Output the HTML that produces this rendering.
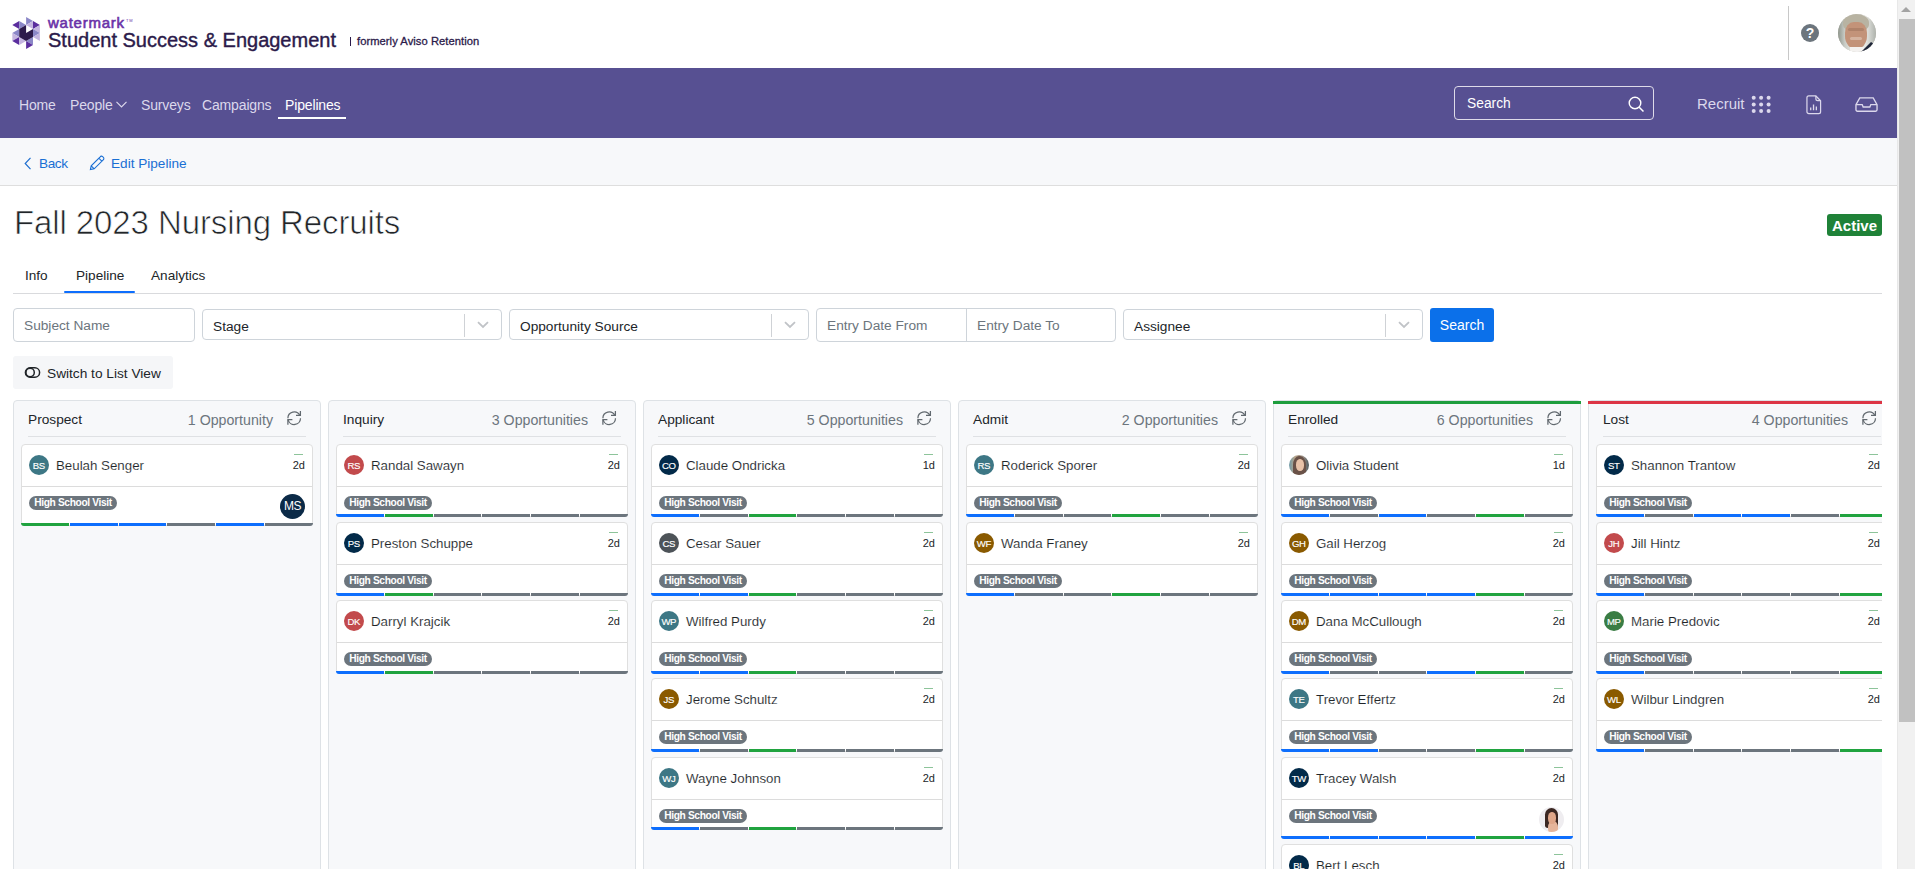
<!DOCTYPE html>
<html><head><meta charset="utf-8">
<style>
*{box-sizing:border-box}
html,body{margin:0;padding:0}
body{width:1915px;height:869px;overflow:hidden;position:relative;background:#fff;font-family:"Liberation Sans",sans-serif;color:#212529}
.abs{position:absolute;white-space:nowrap}
/* header */
#hdr{position:absolute;left:0;top:0;width:1897px;height:68px;background:#fff}
#logo{position:absolute;left:12px;top:12px;width:30px;height:40px}
#wm{position:absolute;left:48px;top:13.5px;letter-spacing:0.75px;font-size:15px;font-weight:400;color:#6a32a8;-webkit-text-stroke:0.6px #6a32a8}
#sse{position:absolute;left:48px;top:29px;font-size:20px;font-weight:400;color:#2b1a4a;-webkit-text-stroke:0.4px #2b1a4a}
#fa{position:absolute;left:357px;top:35px;font-size:11.2px;letter-spacing:0.05px;font-weight:400;color:#2b1a4a;-webkit-text-stroke:0.3px #2b1a4a}
#pipe{position:absolute;left:350px;top:37px;width:1px;height:9px;background:#2b1a4a}
#vdiv{position:absolute;left:1788px;top:6px;width:1px;height:54px;background:#c8c8c8}
#help{position:absolute;left:1801px;top:24px;width:18px;height:18px;border-radius:50%;background:#6c757d;color:#fff;font-size:14px;font-weight:700;text-align:center;line-height:18px}
#me{position:absolute;left:1838px;top:14px;width:38px;height:38px;border-radius:50%;overflow:hidden;background:#c9c3b8;filter:blur(0.4px)}
/* nav */
#nav{position:absolute;left:0;top:68px;width:1897px;height:70px;background:#575092}
.ni{position:absolute;top:29px;font-size:14px;letter-spacing:-0.15px;color:#dcd8ec}
#nsearch{position:absolute;left:1454px;top:18px;width:200px;height:34px;border:1px solid #dedbe9;border-radius:4px}
#nsearch span{position:absolute;left:12px;top:9px;font-size:13.8px;color:#fff}
/* subheader */
#sub{position:absolute;left:0;top:138px;width:1897px;height:48px;background:#f7f8fa;border-bottom:1px solid #dedede}
.lnk{position:absolute;top:18px;font-size:13.6px;color:#1a6fd4}
#title{position:absolute;left:14px;top:204px;font-size:33px;color:#212529;letter-spacing:-0.1px;-webkit-text-stroke:0.7px #fff}
#active{position:absolute;left:1827px;top:214px;width:55px;height:22px;background:#1f8238;border-radius:3px;color:#fff;font-weight:700;font-size:15px;text-align:center;line-height:23px}
.tab{position:absolute;top:268px;font-size:13.6px;color:#212529}
#tabul{position:absolute;left:64px;top:291px;width:71px;height:2px;background:#0d6efd;border-radius:1px}
#tabline{position:absolute;left:13px;top:293px;width:1869px;height:1px;background:#d9dadd}
.inp{position:absolute;top:309px;height:31px;border:1px solid #ced4da;border-radius:4px;background:#fff}
.inp span{position:absolute;left:10px;top:8px;font-size:13.7px;color:#6c757d}
.sel span{color:#212529}
.sel .vd{position:absolute;top:4px;width:1px;height:23px;background:#cfd2d6}
.sel svg{position:absolute;top:11px}
#sbtn{position:absolute;left:1430px;top:308px;width:64px;height:34px;background:#0b70ea;border-radius:3px;color:#fff;font-size:14px;text-align:center;line-height:34px}
#switch{position:absolute;left:13px;top:356px;width:160px;height:33px;background:#f5f6f8;border-radius:3px}
#switch span{position:absolute;left:34px;top:10px;font-size:13.7px;color:#212529}
/* kanban */
#kb{position:absolute;left:0;top:0;width:1882px;height:869px;overflow:hidden}
.col{position:absolute;top:400px;width:308px;height:600px;background:#f7f8fa;border:1px solid #dee2e6;border-radius:4px}
.tb{position:absolute;left:-1px;top:0px;width:308px;height:3px}
.ct{position:absolute;left:14px;top:10.5px;font-size:13.7px;color:#212529;white-space:nowrap}
.cc{position:absolute;right:47px;top:11px;font-size:14.2px;color:#6c757d;white-space:nowrap}
.rf{position:absolute;left:273px;top:10px}
.sep{position:absolute;left:14px;top:35px;width:278px;height:1px;background:#dfe1e4}
.card{position:absolute;left:7px;width:292px;background:#fff;border:1px solid #dfdfdf;border-radius:4px}
.ch{position:absolute;left:0;top:0;width:290px;height:42px;border-bottom:1px solid #dcdcdc}
.av{position:absolute;left:7px;top:10px;width:20px;height:20px;border-radius:50%;color:#fff;font-size:9.6px;font-weight:400;text-align:center;line-height:22.4px;letter-spacing:-0.4px;text-indent:-0.4px;overflow:hidden;-webkit-text-stroke:0.15px #fff}
.nm{position:absolute;left:34px;top:13px;font-size:13.3px;color:#212529;white-space:nowrap;-webkit-text-stroke:0.12px #fff}
.dash{position:absolute;left:272px;top:9px;width:9px;height:1px;background:#8dc49a}
.dd{position:absolute;right:7px;top:14px;font-size:11px;color:#212529}
.badge{position:absolute;left:7px;top:51px;width:88px;height:14px;border-radius:7px;background:#6c757d;color:#fff;font-size:10.2px;font-weight:700;line-height:14px;text-align:center;letter-spacing:-0.35px;white-space:nowrap}
.pb{position:absolute;left:-1px;width:292px;height:3px;display:flex;gap:1px;border-radius:0 0 4px 4px;overflow:hidden}
.pb i{flex:1;height:3px;display:block}
.ms{position:absolute;left:258px;top:49px;width:25px;height:25px;border-radius:50%;background:#0b2a47;color:#fff;font-size:12px;text-align:center;line-height:25px;letter-spacing:-0.5px}
.ph2{position:absolute;left:257px;top:49px;width:25px;height:25px;border-radius:50%;background:#efedf0;overflow:hidden}
.hair2{position:absolute;left:6px;top:1px;width:13px;height:20px;border-radius:7px 7px 3px 3px;background:#3b2722}
.face2{position:absolute;left:9px;top:5px;width:8px;height:12px;border-radius:45%;background:#dfa689;box-shadow:1px 10px 0 1px #e6b59b}
.ph1{background:linear-gradient(90deg,#6f9aa8 0%,#b8a58a 30%,#9a8f86 70%,#4d5a60 100%)}
.ph1 .hair{position:absolute;left:4px;top:1px;width:13px;height:20px;border-radius:45% 45% 20% 20%;background:#6a5248}
.ph1 .face{position:absolute;left:6.5px;top:4px;width:8.5px;height:12px;border-radius:45%;background:#e8c2a8}
/* scrollbar */
#sb{position:absolute;left:1897px;top:0;width:18px;height:869px;background:#f1f1f1;border-left:1px solid #e8e8e8}
#sbt{position:absolute;left:1899px;top:19px;width:16px;height:703px;background:#c1c1c1}
#sbu{position:absolute;left:1901px;top:7px;width:0;height:0;border-left:5px solid transparent;border-right:5px solid transparent;border-bottom:5px solid #a3a3a3}
</style></head>
<body>
<div id="hdr">
  <svg id="logo" width="30" height="40" viewBox="0 0 30 40"><polygon points="7.20,9.00 7.20,17.00 0.30,13.00" fill="#5b2e9e"/><polygon points="7.20,17.00 7.20,25.00 0.30,21.00" fill="#8b87c7"/><polygon points="0.30,21.00 0.30,29.00 7.20,25.00" fill="#c4b5e0"/><polygon points="7.20,25.00 7.20,33.00 0.30,29.00" fill="#5b2e9e"/><polygon points="7.20,9.00 7.20,17.00 14.10,13.00" fill="#8b87c7"/><polygon points="7.20,25.00 7.20,33.00 14.10,29.00" fill="#c4b5e0"/><polygon points="14.10,5.00 14.10,13.00 21.00,9.00" fill="#8b87c7"/><polygon points="21.00,9.00 21.00,17.00 14.10,13.00" fill="#c4b5e0"/><polygon points="21.00,25.00 21.00,33.00 14.10,29.00" fill="#8b87c7"/><polygon points="14.10,29.00 14.10,37.00 21.00,33.00" fill="#5b2e9e"/><polygon points="21.00,9.00 21.00,17.00 27.90,13.00" fill="#5b2e9e"/><polygon points="27.90,13.00 27.90,21.00 21.00,17.00" fill="#c4b5e0"/><polygon points="21.00,17.00 21.00,25.00 27.90,21.00" fill="#8b87c7"/><polygon points="27.90,21.00 27.90,29.00 21.00,25.00" fill="#c4b5e0"/><polygon points="7.20,17.00 14.10,13.00 14.10,21.00 21.00,17.00 21.00,25.00 14.10,29.00 7.20,25.00" fill="#2d1b4b"/></svg>
  <span id="wm">watermark<span style="position:absolute;left:78px;top:4px;font-size:4px;-webkit-text-stroke:0">TM</span></span>
  <span id="sse">Student Success &amp; Engagement</span>
  <div id="pipe"></div><span id="fa">formerly Aviso Retention</span>
  <div id="vdiv"></div>
  <div id="help">?</div>
  <div id="me">
    <div style="position:absolute;left:0;top:0;width:38px;height:38px;background:linear-gradient(90deg,#8f968d 0%,#c9ccc6 18%,#e4e5e1 35%,#d5d7d2 60%,#e8e9e5 72%,#aeb2ac 100%)"></div>
    <div style="position:absolute;left:5px;top:0px;width:26px;height:17px;border-radius:50% 50% 35% 35%;background:#b8b3a2"></div>
    <div style="position:absolute;left:7px;top:8px;width:22px;height:27px;border-radius:40% 40% 48% 48%;background:#c39379"></div>
    <div style="position:absolute;left:10px;top:14px;width:16px;height:3px;border-radius:2px;background:#8a6550;opacity:.35"></div>
    <div style="position:absolute;left:12px;top:23px;width:12px;height:3px;border-radius:2px;background:#f0e4da;opacity:.4"></div>
    <div style="position:absolute;left:12px;top:33px;width:14px;height:6px;background:#f4f2f0"></div>
    <div style="position:absolute;left:0;top:0;width:38px;height:38px;background:#1f2638;clip-path:polygon(23px 38px,33px 28px,36px 30px,38px 38px)"></div>
  </div>
</div>
<div id="nav">
  <span class="ni" style="left:19px">Home</span>
  <span class="ni" style="left:70px">People</span>
  <svg class="abs" style="left:116px;top:33px" width="11" height="7" viewBox="0 0 11 7"><path d="M0.5 0.8 L5.5 5.8 L10.5 0.8" fill="none" stroke="#dcd8ec" stroke-width="1.2"/></svg>
  <span class="ni" style="left:141px">Surveys</span>
  <span class="ni" style="left:202px">Campaigns</span>
  <span class="ni" style="left:285px;color:#fff">Pipelines</span>
  <div class="abs" style="left:278px;top:49px;width:68px;height:2px;background:#fff"></div>
  <div id="nsearch"><span>Search</span>
    <svg class="abs" style="left:173px;top:9px" width="17" height="17" viewBox="0 0 17 17"><circle cx="7" cy="7" r="5.8" fill="none" stroke="#fff" stroke-width="1.4"/><path d="M11.2 11.2 L15.5 15.5" stroke="#fff" stroke-width="1.5"/></svg>
  </div>
  <span class="abs" style="left:1697px;top:27px;font-size:15px;color:#dcd8ec">Recruit</span>
  <svg class="abs" style="left:1751px;top:27px" width="20" height="20" viewBox="0 0 20 20" fill="#dcd8ec">
    <circle cx="2.7" cy="2.8" r="2"/><circle cx="10.1" cy="2.8" r="2"/><circle cx="17.6" cy="2.8" r="2"/>
    <circle cx="2.7" cy="9.5" r="2"/><circle cx="10.1" cy="9.5" r="2"/><circle cx="17.6" cy="9.5" r="2"/>
    <circle cx="2.7" cy="16" r="2"/><circle cx="10.1" cy="16" r="2"/><circle cx="17.6" cy="16" r="2"/>
  </svg>
  <svg class="abs" style="left:1805.5px;top:27px" width="16" height="20" viewBox="0 0 17 21" preserveAspectRatio="none" fill="none" stroke="#dcd8ec" stroke-width="1.3">
    <path d="M3 1 H10.5 L15.5 6 V17.5 A2 2 0 0 1 13.5 19.5 H3 A2 2 0 0 1 1 17.5 V3 A2 2 0 0 1 3 1 Z"/>
    <path d="M10.5 1 V4 A2 2 0 0 0 12.5 6 H15.5"/>
    <path d="M5 16 V13 M8 16 V10 M11 16 V12" stroke-width="1.4"/>
  </svg>
  <svg class="abs" style="left:1854.5px;top:29.2px" width="23" height="15.2" viewBox="0 0 24 16" preserveAspectRatio="none" fill="none" stroke="#dcd8ec" stroke-width="1.4">
    <path d="M5 1 H19 L23 8 V13.5 A1.5 1.5 0 0 1 21.5 15 H2.5 A1.5 1.5 0 0 1 1 13.5 V8 Z"/>
    <path d="M1 8 H7.5 L8.5 10.5 H15.5 L16.5 8 H23"/>
  </svg>
</div>
<div id="sub">
  <svg class="abs" style="left:24px;top:19px" width="8" height="13" viewBox="0 0 8 13"><path d="M6.5 0.8 L1.2 6.5 L6.5 12.2" fill="none" stroke="#1f6fd0" stroke-width="1.2"/></svg>
  <span class="lnk" style="left:39px;letter-spacing:-0.4px">Back</span>
  <svg class="abs" style="left:89px;top:17px" width="16" height="16" viewBox="0 0 16 16" fill="none" stroke="#1a6fd4" stroke-width="1.1"><path d="M11.2 1.8 A1.6 1.6 0 0 1 13.6 1.6 L14.4 2.4 A1.6 1.6 0 0 1 14.2 4.8 L5.2 13.8 L1.4 14.6 L2.2 10.8 Z M9.8 3.2 L12.8 6.2 M2.2 10.8 L5.2 13.8"/></svg>
  <span class="lnk" style="left:111px">Edit Pipeline</span>
</div>
<span id="title">Fall 2023 Nursing Recruits</span>
<div id="active">Active</div>
<span class="tab" style="left:25px">Info</span>
<span class="tab" style="left:76px">Pipeline</span>
<span class="tab" style="left:151px">Analytics</span>
<div id="tabul"></div>
<div id="tabline"></div>

<div class="inp" style="left:13px;width:182px;height:34px;top:308px"><span style="top:9px">Subject Name</span></div>
<div class="inp sel" style="left:202px;width:300px"><span style="top:9px">Stage</span><div class="vd" style="left:261px"></div>
  <svg style="left:274px" width="12" height="8" viewBox="0 0 12 8"><path d="M1 1.2 L6 6 L11 1.2" fill="none" stroke="#c0c3c7" stroke-width="1.8"/></svg></div>
<div class="inp sel" style="left:509px;width:300px"><span style="top:9px">Opportunity Source</span><div class="vd" style="left:261px"></div>
  <svg style="left:274px" width="12" height="8" viewBox="0 0 12 8"><path d="M1 1.2 L6 6 L11 1.2" fill="none" stroke="#c0c3c7" stroke-width="1.8"/></svg></div>
<div class="inp" style="left:816px;width:300px;height:34px;top:308px"><span style="top:9px">Entry Date From</span>
  <div class="abs" style="left:149px;top:0;width:1px;height:32px;background:#ced4da"></div><span style="left:160px;top:9px">Entry Date To</span></div>
<div class="inp sel" style="left:1123px;width:300px"><span style="top:9px">Assignee</span><div class="vd" style="left:261px"></div>
  <svg style="left:274px" width="12" height="8" viewBox="0 0 12 8"><path d="M1 1.2 L6 6 L11 1.2" fill="none" stroke="#c0c3c7" stroke-width="1.8"/></svg></div>
<div id="sbtn">Search</div>
<div id="switch">
  <svg class="abs" style="left:11px;top:10px" width="17" height="13" viewBox="0 0 17 13" fill="none" stroke="#212529" stroke-width="1.5"><rect x="1.4" y="1.8" width="14.2" height="9.4" rx="4.7"/><circle cx="6.1" cy="6.5" r="4.2"/></svg>
  <span>Switch to List View</span>
</div>

<div id="kb"><div class="col" style="left:13px"><span class="ct">Prospect</span><span class="cc">1 Opportunity</span><svg class="rf" width="16" height="16" viewBox="0 0 16 16" style="overflow:visible"><path d="M0.90 7.20 A6.3 6.3 0 0 1 12.76 4.24" fill="none" stroke="#62696f" stroke-width="1.25"/><path d="M9 4.4 H13.4 V0" fill="none" stroke="#62696f" stroke-width="1.25"/><path d="M13.50 7.20 A6.3 6.3 0 0 1 1.11 8.83" fill="none" stroke="#62696f" stroke-width="1.25"/><path d="M5.4 8.7 H0.9 V13.8" fill="none" stroke="#62696f" stroke-width="1.25"/></svg><div class="sep"></div><div class="card" style="top:43.00px;height:82.2px"><div class="ch"><span class="av" style="background:#3d7785">BS</span><span class="nm">Beulah Senger</span><span class="dash"></span><span class="dd">2d</span></div><span class="badge">High School Visit</span><span class="ms">MS</span><div class="pb" style="top:78.20px"><i style="background:#20a33f"></i><i style="background:#0d6efd"></i><i style="background:#0d6efd"></i><i style="background:#6c757d"></i><i style="background:#0d6efd"></i><i style="background:#6c757d"></i></div></div></div><div class="col" style="left:328px"><span class="ct">Inquiry</span><span class="cc">3 Opportunities</span><svg class="rf" width="16" height="16" viewBox="0 0 16 16" style="overflow:visible"><path d="M0.90 7.20 A6.3 6.3 0 0 1 12.76 4.24" fill="none" stroke="#62696f" stroke-width="1.25"/><path d="M9 4.4 H13.4 V0" fill="none" stroke="#62696f" stroke-width="1.25"/><path d="M13.50 7.20 A6.3 6.3 0 0 1 1.11 8.83" fill="none" stroke="#62696f" stroke-width="1.25"/><path d="M5.4 8.7 H0.9 V13.8" fill="none" stroke="#62696f" stroke-width="1.25"/></svg><div class="sep"></div><div class="card" style="top:43.00px;height:73.4px"><div class="ch"><span class="av" style="background:#c24a4c">RS</span><span class="nm">Randal Sawayn</span><span class="dash"></span><span class="dd">2d</span></div><span class="badge">High School Visit</span><div class="pb" style="top:69.40px"><i style="background:#0d6efd"></i><i style="background:#20a33f"></i><i style="background:#6c757d"></i><i style="background:#6c757d"></i><i style="background:#6c757d"></i><i style="background:#6c757d"></i></div></div><div class="card" style="top:121.15px;height:73.4px"><div class="ch"><span class="av" style="background:#022a49">PS</span><span class="nm">Preston Schuppe</span><span class="dash"></span><span class="dd">2d</span></div><span class="badge">High School Visit</span><div class="pb" style="top:69.40px"><i style="background:#0d6efd"></i><i style="background:#20a33f"></i><i style="background:#6c757d"></i><i style="background:#6c757d"></i><i style="background:#6c757d"></i><i style="background:#6c757d"></i></div></div><div class="card" style="top:199.30px;height:73.4px"><div class="ch"><span class="av" style="background:#c24a4c">DK</span><span class="nm">Darryl Krajcik</span><span class="dash"></span><span class="dd">2d</span></div><span class="badge">High School Visit</span><div class="pb" style="top:69.40px"><i style="background:#0d6efd"></i><i style="background:#20a33f"></i><i style="background:#6c757d"></i><i style="background:#6c757d"></i><i style="background:#6c757d"></i><i style="background:#6c757d"></i></div></div></div><div class="col" style="left:643px"><span class="ct">Applicant</span><span class="cc">5 Opportunities</span><svg class="rf" width="16" height="16" viewBox="0 0 16 16" style="overflow:visible"><path d="M0.90 7.20 A6.3 6.3 0 0 1 12.76 4.24" fill="none" stroke="#62696f" stroke-width="1.25"/><path d="M9 4.4 H13.4 V0" fill="none" stroke="#62696f" stroke-width="1.25"/><path d="M13.50 7.20 A6.3 6.3 0 0 1 1.11 8.83" fill="none" stroke="#62696f" stroke-width="1.25"/><path d="M5.4 8.7 H0.9 V13.8" fill="none" stroke="#62696f" stroke-width="1.25"/></svg><div class="sep"></div><div class="card" style="top:43.00px;height:73.4px"><div class="ch"><span class="av" style="background:#022a49">CO</span><span class="nm">Claude Ondricka</span><span class="dash"></span><span class="dd">1d</span></div><span class="badge">High School Visit</span><div class="pb" style="top:69.40px"><i style="background:#0d6efd"></i><i style="background:#6c757d"></i><i style="background:#20a33f"></i><i style="background:#6c757d"></i><i style="background:#6c757d"></i><i style="background:#6c757d"></i></div></div><div class="card" style="top:121.15px;height:73.4px"><div class="ch"><span class="av" style="background:#4d5358">CS</span><span class="nm">Cesar Sauer</span><span class="dash"></span><span class="dd">2d</span></div><span class="badge">High School Visit</span><div class="pb" style="top:69.40px"><i style="background:#0d6efd"></i><i style="background:#0d6efd"></i><i style="background:#20a33f"></i><i style="background:#6c757d"></i><i style="background:#6c757d"></i><i style="background:#6c757d"></i></div></div><div class="card" style="top:199.30px;height:73.4px"><div class="ch"><span class="av" style="background:#3d7785">WP</span><span class="nm">Wilfred Purdy</span><span class="dash"></span><span class="dd">2d</span></div><span class="badge">High School Visit</span><div class="pb" style="top:69.40px"><i style="background:#0d6efd"></i><i style="background:#0d6efd"></i><i style="background:#20a33f"></i><i style="background:#6c757d"></i><i style="background:#6c757d"></i><i style="background:#6c757d"></i></div></div><div class="card" style="top:277.45px;height:73.4px"><div class="ch"><span class="av" style="background:#8a5a00">JS</span><span class="nm">Jerome Schultz</span><span class="dash"></span><span class="dd">2d</span></div><span class="badge">High School Visit</span><div class="pb" style="top:69.40px"><i style="background:#0d6efd"></i><i style="background:#6c757d"></i><i style="background:#20a33f"></i><i style="background:#6c757d"></i><i style="background:#6c757d"></i><i style="background:#6c757d"></i></div></div><div class="card" style="top:355.60px;height:73.4px"><div class="ch"><span class="av" style="background:#3d7785">WJ</span><span class="nm">Wayne Johnson</span><span class="dash"></span><span class="dd">2d</span></div><span class="badge">High School Visit</span><div class="pb" style="top:69.40px"><i style="background:#0d6efd"></i><i style="background:#6c757d"></i><i style="background:#20a33f"></i><i style="background:#6c757d"></i><i style="background:#6c757d"></i><i style="background:#6c757d"></i></div></div></div><div class="col" style="left:958px"><span class="ct">Admit</span><span class="cc">2 Opportunities</span><svg class="rf" width="16" height="16" viewBox="0 0 16 16" style="overflow:visible"><path d="M0.90 7.20 A6.3 6.3 0 0 1 12.76 4.24" fill="none" stroke="#62696f" stroke-width="1.25"/><path d="M9 4.4 H13.4 V0" fill="none" stroke="#62696f" stroke-width="1.25"/><path d="M13.50 7.20 A6.3 6.3 0 0 1 1.11 8.83" fill="none" stroke="#62696f" stroke-width="1.25"/><path d="M5.4 8.7 H0.9 V13.8" fill="none" stroke="#62696f" stroke-width="1.25"/></svg><div class="sep"></div><div class="card" style="top:43.00px;height:73.4px"><div class="ch"><span class="av" style="background:#3d7785">RS</span><span class="nm">Roderick Sporer</span><span class="dash"></span><span class="dd">2d</span></div><span class="badge">High School Visit</span><div class="pb" style="top:69.40px"><i style="background:#0d6efd"></i><i style="background:#6c757d"></i><i style="background:#6c757d"></i><i style="background:#20a33f"></i><i style="background:#6c757d"></i><i style="background:#6c757d"></i></div></div><div class="card" style="top:121.15px;height:73.4px"><div class="ch"><span class="av" style="background:#8a5a00">WF</span><span class="nm">Wanda Franey</span><span class="dash"></span><span class="dd">2d</span></div><span class="badge">High School Visit</span><div class="pb" style="top:69.40px"><i style="background:#0d6efd"></i><i style="background:#6c757d"></i><i style="background:#6c757d"></i><i style="background:#20a33f"></i><i style="background:#6c757d"></i><i style="background:#6c757d"></i></div></div></div><div class="col" style="left:1273px"><div class="tb" style="background:#1e9e3e"></div><span class="ct">Enrolled</span><span class="cc">6 Opportunities</span><svg class="rf" width="16" height="16" viewBox="0 0 16 16" style="overflow:visible"><path d="M0.90 7.20 A6.3 6.3 0 0 1 12.76 4.24" fill="none" stroke="#62696f" stroke-width="1.25"/><path d="M9 4.4 H13.4 V0" fill="none" stroke="#62696f" stroke-width="1.25"/><path d="M13.50 7.20 A6.3 6.3 0 0 1 1.11 8.83" fill="none" stroke="#62696f" stroke-width="1.25"/><path d="M5.4 8.7 H0.9 V13.8" fill="none" stroke="#62696f" stroke-width="1.25"/></svg><div class="sep"></div><div class="card" style="top:43.00px;height:73.4px"><div class="ch"><span class="av ph1"><span class="hair"></span><span class="face"></span></span><span class="nm">Olivia Student</span><span class="dash"></span><span class="dd">1d</span></div><span class="badge">High School Visit</span><div class="pb" style="top:69.40px"><i style="background:#0d6efd"></i><i style="background:#6c757d"></i><i style="background:#0d6efd"></i><i style="background:#6c757d"></i><i style="background:#20a33f"></i><i style="background:#6c757d"></i></div></div><div class="card" style="top:121.15px;height:73.4px"><div class="ch"><span class="av" style="background:#8a5a00">GH</span><span class="nm">Gail Herzog</span><span class="dash"></span><span class="dd">2d</span></div><span class="badge">High School Visit</span><div class="pb" style="top:69.40px"><i style="background:#0d6efd"></i><i style="background:#0d6efd"></i><i style="background:#0d6efd"></i><i style="background:#0d6efd"></i><i style="background:#20a33f"></i><i style="background:#6c757d"></i></div></div><div class="card" style="top:199.30px;height:73.4px"><div class="ch"><span class="av" style="background:#8a5a00">DM</span><span class="nm">Dana McCullough</span><span class="dash"></span><span class="dd">2d</span></div><span class="badge">High School Visit</span><div class="pb" style="top:69.40px"><i style="background:#0d6efd"></i><i style="background:#6c757d"></i><i style="background:#6c757d"></i><i style="background:#0d6efd"></i><i style="background:#20a33f"></i><i style="background:#6c757d"></i></div></div><div class="card" style="top:277.45px;height:73.4px"><div class="ch"><span class="av" style="background:#3d7785">TE</span><span class="nm">Trevor Effertz</span><span class="dash"></span><span class="dd">2d</span></div><span class="badge">High School Visit</span><div class="pb" style="top:69.40px"><i style="background:#0d6efd"></i><i style="background:#0d6efd"></i><i style="background:#6c757d"></i><i style="background:#6c757d"></i><i style="background:#20a33f"></i><i style="background:#6c757d"></i></div></div><div class="card" style="top:355.60px;height:82.2px"><div class="ch"><span class="av" style="background:#022a49">TW</span><span class="nm">Tracey Walsh</span><span class="dash"></span><span class="dd">2d</span></div><span class="badge">High School Visit</span><span class="ph2"><span class="hair2"></span><span class="face2"></span></span><div class="pb" style="top:78.20px"><i style="background:#0d6efd"></i><i style="background:#0d6efd"></i><i style="background:#0d6efd"></i><i style="background:#0d6efd"></i><i style="background:#20a33f"></i><i style="background:#0d6efd"></i></div></div><div class="card" style="top:442.55px;height:73.4px"><div class="ch"><span class="av" style="background:#022a49">BL</span><span class="nm">Bert Lesch</span><span class="dash"></span><span class="dd">2d</span></div><span class="badge">High School Visit</span><div class="pb" style="top:69.40px"><i style="background:#6c757d"></i><i style="background:#6c757d"></i><i style="background:#6c757d"></i><i style="background:#6c757d"></i><i style="background:#6c757d"></i><i style="background:#6c757d"></i></div></div></div><div class="col" style="left:1588px"><div class="tb" style="background:#dc3545"></div><span class="ct">Lost</span><span class="cc">4 Opportunities</span><svg class="rf" width="16" height="16" viewBox="0 0 16 16" style="overflow:visible"><path d="M0.90 7.20 A6.3 6.3 0 0 1 12.76 4.24" fill="none" stroke="#62696f" stroke-width="1.25"/><path d="M9 4.4 H13.4 V0" fill="none" stroke="#62696f" stroke-width="1.25"/><path d="M13.50 7.20 A6.3 6.3 0 0 1 1.11 8.83" fill="none" stroke="#62696f" stroke-width="1.25"/><path d="M5.4 8.7 H0.9 V13.8" fill="none" stroke="#62696f" stroke-width="1.25"/></svg><div class="sep"></div><div class="card" style="top:43.00px;height:73.4px"><div class="ch"><span class="av" style="background:#022a49">ST</span><span class="nm">Shannon Trantow</span><span class="dash"></span><span class="dd">2d</span></div><span class="badge">High School Visit</span><div class="pb" style="top:69.40px"><i style="background:#0d6efd"></i><i style="background:#6c757d"></i><i style="background:#0d6efd"></i><i style="background:#0d6efd"></i><i style="background:#6c757d"></i><i style="background:#20a33f"></i></div></div><div class="card" style="top:121.15px;height:73.4px"><div class="ch"><span class="av" style="background:#c24a4c">JH</span><span class="nm">Jill Hintz</span><span class="dash"></span><span class="dd">2d</span></div><span class="badge">High School Visit</span><div class="pb" style="top:69.40px"><i style="background:#0d6efd"></i><i style="background:#6c757d"></i><i style="background:#6c757d"></i><i style="background:#6c757d"></i><i style="background:#6c757d"></i><i style="background:#20a33f"></i></div></div><div class="card" style="top:199.30px;height:73.4px"><div class="ch"><span class="av" style="background:#3a7d44">MP</span><span class="nm">Marie Predovic</span><span class="dash"></span><span class="dd">2d</span></div><span class="badge">High School Visit</span><div class="pb" style="top:69.40px"><i style="background:#0d6efd"></i><i style="background:#6c757d"></i><i style="background:#6c757d"></i><i style="background:#6c757d"></i><i style="background:#6c757d"></i><i style="background:#20a33f"></i></div></div><div class="card" style="top:277.45px;height:73.4px"><div class="ch"><span class="av" style="background:#8a5a00">WL</span><span class="nm">Wilbur Lindgren</span><span class="dash"></span><span class="dd">2d</span></div><span class="badge">High School Visit</span><div class="pb" style="top:69.40px"><i style="background:#0d6efd"></i><i style="background:#6c757d"></i><i style="background:#6c757d"></i><i style="background:#6c757d"></i><i style="background:#6c757d"></i><i style="background:#20a33f"></i></div></div></div></div>

<div id="sb"></div><div id="sbt"></div><div id="sbu"></div>
</body></html>
